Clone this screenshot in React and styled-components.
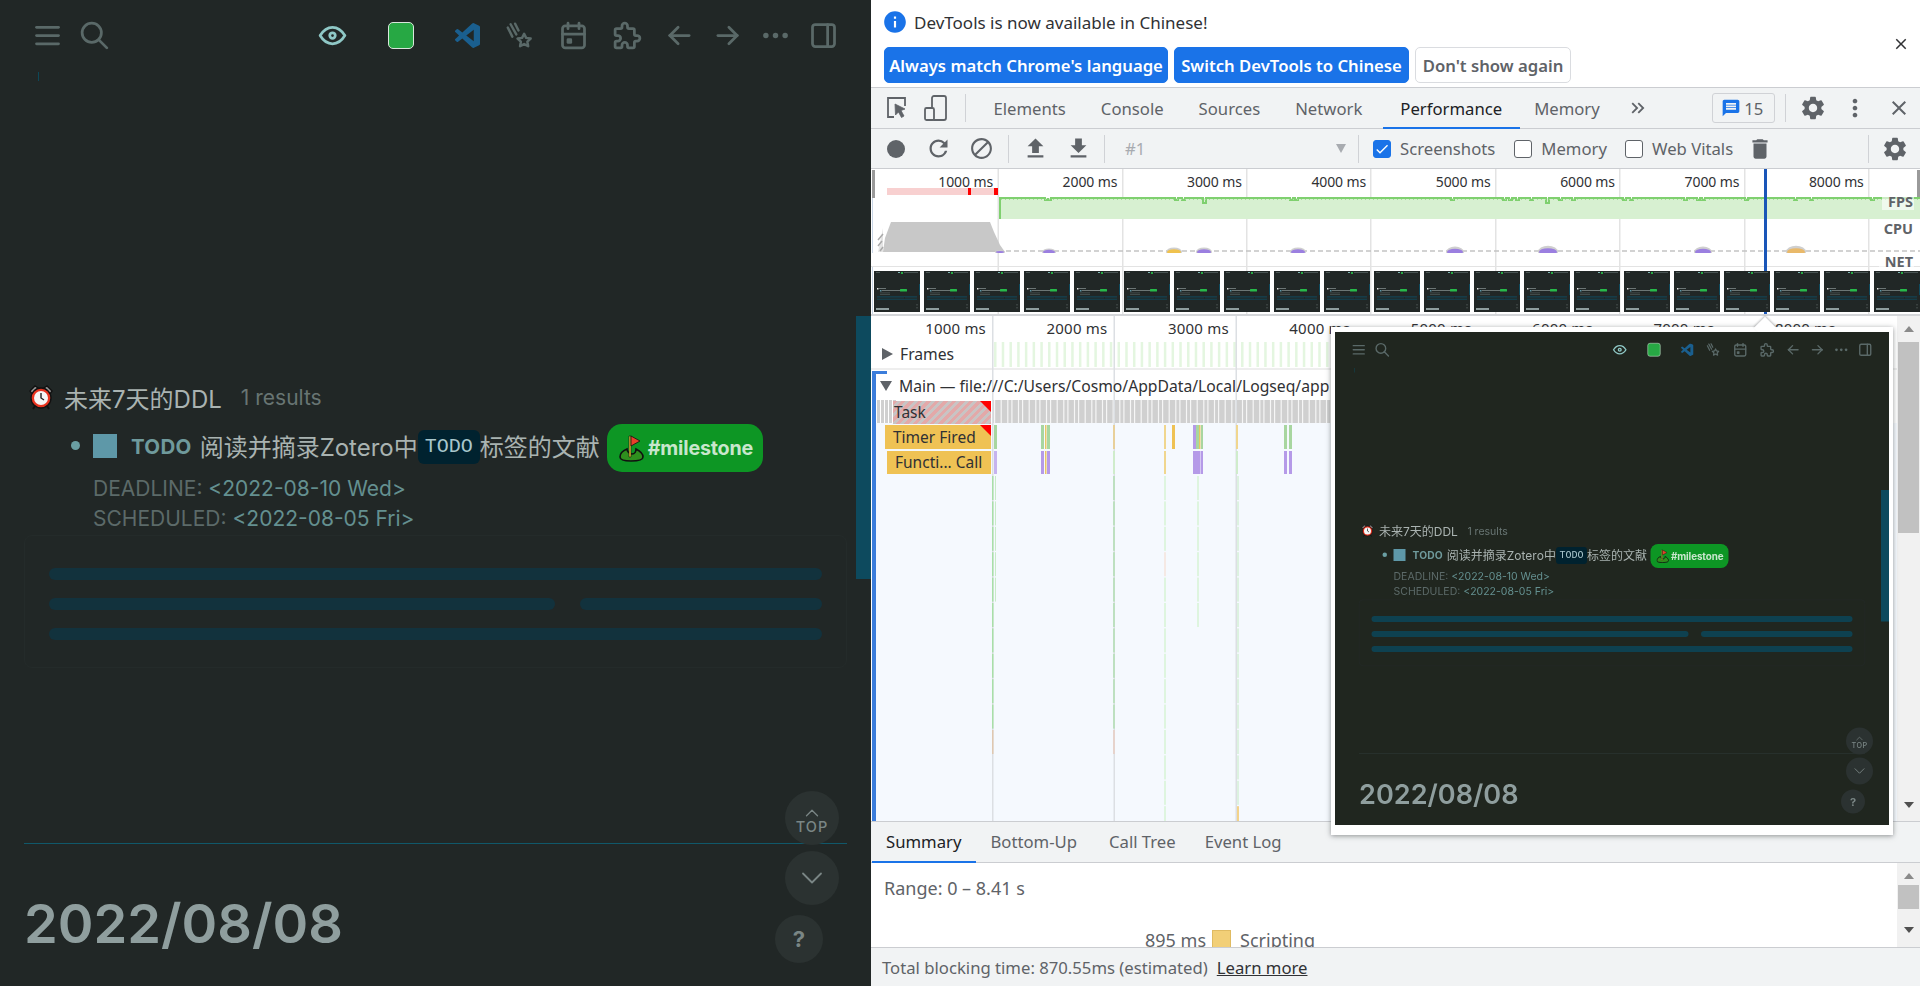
import React from "react";
import styled, { createGlobalStyle } from "styled-components";
import { TbMenu2, TbSearch, TbEye, TbCalendarEvent, TbPuzzle, TbArrowLeft, TbArrowRight, TbDots, TbLayoutSidebarRight, TbChevronUp, TbChevronDown } from "react-icons/tb";
import { MdInfo, MdClose, MdSettings, MdMoreVert, MdRefresh, MdBlock, MdFileUpload, MdFileDownload, MdDelete, MdMessage, MdCheck, MdKeyboardDoubleArrowRight } from "react-icons/md";

const Global = createGlobalStyle`
  html, body { margin: 0; padding: 0; background: #fff; }
  * { box-sizing: border-box; }
`;

const Root = styled.div`
  display: flex;
  width: 1920px;
  height: 986px;
  overflow: hidden;
  font-family: "Noto Sans", "Open Sans", sans-serif;
`;

/* ---------- Logseq page ---------- */
const Page = styled.div`
  position: relative;
  flex: none;
  display: flex;
  flex-direction: column;
  width: ${(p) => p.$w}px;
  height: 986px;
  overflow: hidden;
  background: ${(p) => (p.$dim ? "#20261f" : "#212726")};
  font-family: Inter, "Noto Sans CJK SC", sans-serif;
`;
const Header = styled.header`
  flex: none;
  display: flex;
  align-items: center;
  justify-content: space-between;
  height: 70px;
  padding: 0 31px;
  color: #5a6968;
`;
const IconGroup = styled.div`
  display: flex;
  align-items: center;
`;
const Slot = styled.span`
  display: flex;
  align-items: center;
  justify-content: center;
  width: 33px;
  height: 33px;
  margin-left: ${(p) => p.$gap || 0}px;
  color: ${(p) => p.$color || "inherit"};
`;
const GreenSwatch = styled.span`
  display: block;
  width: 26px;
  height: 27px;
  background: #27a844;
  border: 1px solid #d9e6dc;
  border-radius: 5px;
`;
const Caret = styled.div`
  flex: none;
  width: 1px;
  height: 9px;
  margin: 2px 0 0 38px;
  background: #0d4858;
`;
const Content = styled.main`
  flex: none;
  padding: 299px ${(p) => p.$pad}px 0 ${(p) => p.$pad}px;
`;
const Heading = styled.div`
  display: flex;
  align-items: center;
  height: 34px;
  padding-left: 4px;
  color: #aab3b1;
  font-size: 24px;
`;
const HeadingText = styled.span`
  margin-left: 10px;
`;
const Results = styled.span`
  margin-left: 19px;
  color: #687573;
  font-size: 21px;
`;
const TodoRow = styled.div`
  display: flex;
  align-items: center;
  height: 48px;
  margin-top: 10px;
  padding-left: 47px;
  color: #a9b3b1;
  font-size: 24px;
`;
const Bullet = styled.span`
  width: 9px;
  height: 9px;
  margin: -6px 13px 0 0;
  border-radius: 50%;
  background: #6a9fa3;
`;
const Check = styled.span`
  width: 24px;
  height: 24px;
  margin-top: -5px;
  background: #5e98a8;
`;
const TodoWord = styled.span`
  margin: -4px 8px 0 14px;
  color: #6f9a9c;
  font-weight: 700;
  font-size: 20.5px;
  letter-spacing: 0.3px;
`;
const RowText = styled.span`
  margin-top: -5px;
  white-space: nowrap;
`;
const CodeChip = styled.code`
  display: flex;
  align-items: center;
  justify-content: center;
  width: 62px;
  height: 34px;
  margin-top: -3px;
  background: #00222f;
  border-radius: 6px;
  color: #a9c7cd;
  font-family: "Liberation Mono", monospace;
  font-size: 20px;
`;
const TagPill = styled.span`
  display: flex;
  align-items: center;
  width: 156px;
  height: 48px;
  margin-left: 7px;
  padding-left: 12px;
  background: #0d9624;
  border-radius: 15px;
  color: #c8e6cc;
  font-weight: 700;
  font-size: 19.7px;
  letter-spacing: -0.2px;
`;
const TagText = styled.span`
  margin-left: 4px;
`;
const Meta = styled.div`
  height: 30px;
  margin-top: ${(p) => p.$mt || 0}px;
  padding-left: 69px;
  color: #5c6a69;
  font-size: 21px;
  line-height: 30px;
  white-space: nowrap;
`;
const MetaDate = styled.span`
  color: #649090;
`;
const SkeletonCard = styled.div`
  display: flex;
  flex-direction: column;
  gap: 18px;
  height: 133px;
  margin-top: 1px;
  padding: 32px 24px 0;
  border: 1px solid #242b2a;
  border-radius: 8px;
`;
const BarRow = styled.div`
  display: flex;
  gap: 25px;
`;
const SkeletonBar = styled.div`
  flex: ${(p) => p.$grow || 1} 1 0;
  height: 12px;
  border-radius: 6px;
  background: ${(p) => (p.$dim ? "#0e4150" : "#12323d")};
`;
const Footer = styled.footer`
  flex: none;
  margin: 175px ${(p) => p.$pad}px 0;
  padding: 49px 0 0;
  border-top: 1px solid ${(p) => (p.$dim ? "#2f3b3b" : "#10586a")};
  color: #8f9e9e;
  font-size: 54.2px;
  font-weight: 600;
  line-height: 60px;
`;
const PageScroll = styled.div`
  position: absolute;
  top: 316px;
  right: 0;
  width: ${(p) => p.$w}px;
  height: 263px;
  background: #0d4a5e;
`;
const FloatStack = styled.div`
  position: absolute;
  top: 791px;
  right: 32px;
  display: flex;
  flex-direction: column;
  align-items: flex-end;
`;
const FloatButton = styled.div`
  display: flex;
  flex-direction: column;
  align-items: center;
  justify-content: center;
  width: ${(p) => p.$size}px;
  height: ${(p) => p.$size}px;
  margin: ${(p) => p.$m || 0};
  border-radius: 50%;
  background: #2b3231;
  color: #7a8685;
`;
const TopLabel = styled.span`
  margin-top: -4px;
  font-size: 14.5px;
  line-height: 14px;
  letter-spacing: 1px;
  font-weight: 500;
`;
const HelpMark = styled.span`
  font-size: 22px;
  font-weight: 700;
`;

const AlarmEmoji = () => (
  <svg width="26" height="26" viewBox="0 0 26 26" style={{ flex: "none" }}>
    <path d="M2 7 7 2l3 2-6 6zM24 7l-5-5-3 2 6 6z" fill="#9a9a9a" stroke="#111" strokeWidth="1.4" />
    <path d="M7 22 5 25M19 22l2 3" stroke="#111" strokeWidth="2" />
    <circle cx="13" cy="14" r="10" fill="#e8331f" stroke="#111" strokeWidth="1.4" />
    <circle cx="13" cy="14" r="7" fill="#f6f6f6" />
    <path d="M13 9v5l3 2" fill="none" stroke="#222" strokeWidth="1.4" />
  </svg>
);
const GolfEmoji = () => (
  <svg width="25" height="28" viewBox="0 0 25 28" style={{ flex: "none" }}>
    <path d="M8 15C3 17 1 20 1 23c0 3 3 4 11 4s12-1 12-4c0-3-3-6-7-8 0 2-1 5-4 5s-5-3-5-5z" fill="#2f8f1e" stroke="#111" strokeWidth="1.6" />
    <path d="M10 2h2v21h-2z" fill="#e4c133" stroke="#111" strokeWidth=".6" />
    <path d="M12 2l9 5-9 5z" fill="#e8402a" stroke="#111" strokeWidth=".8" />
  </svg>
);
const MeteorIcon = () => (
  <svg width="27" height="27" viewBox="0 0 24 24" fill="none" stroke="currentColor" strokeWidth="2.2" strokeLinecap="round" strokeLinejoin="round">
    <path d="M5 2l5 9M2.5 5l4 8M9 1.500l3 6" />
    <path d="M17 10.500l1.800 3.600 4 .6-2.900 2.800.7 4-3.600-1.900-3.600 1.900.7-4-2.900-2.800 4-.6z" />
  </svg>
);
const VsCodeIcon = () => (
  <svg width="25" height="25" viewBox="0 0 24 24" fill="currentColor">
    <path d="M23.15 2.587L18.21.21a1.494 1.494 0 0 0-1.705.29l-9.46 8.63-4.12-3.128a.999.999 0 0 0-1.276.057L.327 7.261A1 1 0 0 0 .326 8.74L3.899 12 .326 15.26a1 1 0 0 0 .001 1.479L1.65 17.94a.999.999 0 0 0 1.276.057l4.12-3.128 9.46 8.63a1.492 1.492 0 0 0 1.704.29l4.942-2.377A1.5 1.5 0 0 0 24 20.06V3.939a1.5 1.5 0 0 0-.85-1.352zm-5.146 14.861L10.826 12l7.178-5.448v10.896z" />
  </svg>
);

const LogseqPage = ({ w, pad, dim }) => (
  <Page $w={w} $dim={dim}>
    <Header>
      <IconGroup>
        <Slot><TbMenu2 size={33} /></Slot>
        <Slot $gap={14}><TbSearch size={33} /></Slot>
      </IconGroup>
      <IconGroup>
        <Slot $color="#8fc8c6"><TbEye size={33} /></Slot>
        <Slot $gap={35}><GreenSwatch /></Slot>
        <Slot $gap={34} $color="#1a5f8f"><VsCodeIcon /></Slot>
        <Slot $gap={18}><MeteorIcon /></Slot>
        <Slot $gap={22}><TbCalendarEvent size={33} /></Slot>
        <Slot $gap={21}><TbPuzzle size={33} /></Slot>
        <Slot $gap={19}><TbArrowLeft size={33} /></Slot>
        <Slot $gap={15}><TbArrowRight size={33} /></Slot>
        <Slot $gap={15}><TbDots size={33} /></Slot>
        <Slot $gap={15}><TbLayoutSidebarRight size={33} /></Slot>
      </IconGroup>
    </Header>
    <Caret />
    <Content $pad={pad}>
      <Heading>
        <AlarmEmoji />
        <HeadingText>未来7天的DDL</HeadingText>
        <Results>1 results</Results>
      </Heading>
      <TodoRow>
        <Bullet />
        <Check />
        <TodoWord>TODO</TodoWord>
        <RowText>阅读并摘录Zotero中</RowText>
        <CodeChip>TODO</CodeChip>
        <RowText>标签的文献</RowText>
        <TagPill>
          <GolfEmoji />
          <TagText>#milestone</TagText>
        </TagPill>
      </TodoRow>
      <Meta $mt={2}>DEADLINE: <MetaDate>&lt;2022-08-10 Wed&gt;</MetaDate></Meta>
      <Meta>SCHEDULED: <MetaDate>&lt;2022-08-05 Fri&gt;</MetaDate></Meta>
      <SkeletonCard>
        <BarRow><SkeletonBar $dim={dim} /></BarRow>
        <BarRow><SkeletonBar $dim={dim} $grow={2.09} /><SkeletonBar $dim={dim} /></BarRow>
        <BarRow><SkeletonBar $dim={dim} /></BarRow>
      </SkeletonCard>
    </Content>
    <Footer $pad={pad} $dim={dim}>2022/08/08</Footer>
    <PageScroll $w={dim ? 16 : 15} />
    <FloatStack>
      <FloatButton $size={54}>
        <TbChevronUp size={22} strokeWidth={1.4} />
        <TopLabel>TOP</TopLabel>
      </FloatButton>
      <FloatButton $size={54} $m="6px 0 0"><TbChevronDown size={36} strokeWidth={1.2} /></FloatButton>
      <FloatButton $size={48} $m="10px 16px 0 0"><HelpMark>?</HelpMark></FloatButton>
    </FloatStack>
  </Page>
);

/* ---------- DevTools ---------- */
const Dev = styled.div`
  position: relative;
  flex: 1;
  display: flex;
  flex-direction: column;
  min-width: 0;
  height: 986px;
  background: #fff;
  color: #5f6368;
  font-size: 16.7px;
`;
const InfoBar = styled.div`
  flex: none;
  display: flex;
  justify-content: space-between;
  align-items: center;
  height: 88px;
  padding: 0 10px 0 13px;
  border-bottom: 1px solid #cbcdd1;
`;
const InfoMain = styled.div`
  align-self: flex-start;
`;
const InfoText = styled.div`
  display: flex;
  align-items: center;
  gap: 6px;
  height: 44px;
  color: #303134;
  font-size: 17px;
`;
const InfoButtons = styled.div`
  display: flex;
  gap: 6px;
  margin-top: 3px;
`;
const InfoButton = styled.button`
  width: ${(p) => p.$w}px;
  height: 36px;
  padding: 0;
  border: 1px solid ${(p) => (p.$plain ? "#dadce0" : "#1a73e8")};
  border-radius: 5px;
  background: ${(p) => (p.$plain ? "#fff" : "#1a73e8")};
  color: ${(p) => (p.$plain ? "#5f6368" : "#fff")};
  font: 600 16.7px "Noto Sans", sans-serif;
  white-space: nowrap;
`;
const TabBar = styled.div`
  flex: none;
  display: flex;
  align-items: center;
  height: 41px;
  padding-left: 14px;
  background: #f1f3f4;
  border-bottom: 1px solid #cbcdd1;
`;
const Sep = styled.span`
  flex: none;
  width: 1px;
  height: 28px;
  margin: ${(p) => p.$m || "0"};
  background: #d0d2d6;
`;
const Tab = styled.span`
  display: flex;
  align-items: center;
  height: 40px;
  padding: 1px 17.5px 0;
  margin: 0 0 -1px ${(p) => p.$ml || 0}px;
  color: ${(p) => (p.$on ? "#202124" : "#5f6368")};
  border-bottom: 2px solid ${(p) => (p.$on ? "#1a73e8" : "transparent")};
  white-space: nowrap;
`;
const Badge = styled.span`
  display: flex;
  align-items: center;
  gap: 3px;
  width: 63px;
  height: 30px;
  margin-left: 63px;
  padding-left: 8px;
  border: 1px solid #d0d2d6;
  border-radius: 3px;
`;
const IconAt = styled.span`
  display: flex;
  flex: none;
  margin-left: ${(p) => p.$ml || 0}px;
  color: ${(p) => p.$color || "#5f6368"};
`;
const Toolbar = styled.div`
  flex: none;
  display: flex;
  align-items: center;
  height: 40px;
  padding-left: 14px;
  background: #f1f3f4;
  border-bottom: 1px solid #cbcdd1;
`;
const Record = styled.span`
  width: 18px;
  height: 18px;
  margin-left: 2px;
  border-radius: 50%;
  background: #5f6368;
`;
const RunSelect = styled.div`
  display: flex;
  justify-content: space-between;
  align-items: center;
  width: 253px;
  padding: 0 12px 0 20px;
  color: #a8abb0;
`;
const SelectArrow = styled.span`
  border-left: 5px solid transparent;
  border-right: 5px solid transparent;
  border-top: 9px solid #a8abb0;
`;
const CheckBox = styled.span`
  display: flex;
  align-items: center;
  justify-content: center;
  flex: none;
  width: 18px;
  height: 18px;
  margin-left: ${(p) => p.$ml}px;
  border-radius: 3px;
  border: 1px solid ${(p) => (p.$on ? "#1a73e8" : "#5f6368")};
  background: ${(p) => (p.$on ? "#1a73e8" : "#fff")};
  color: #fff;
`;
const CheckLabel = styled.span`
  margin-left: 9px;
  white-space: nowrap;
`;
const Overview = styled.div`
  position: relative;
  flex: none;
  height: 147px;
  overflow: hidden;
  border-bottom: 2px solid #d4d6d9;
`;
const ChartSvg = styled.svg`
  position: absolute;
  inset: 0;
  display: block;
`;
const Ticks = styled.div`
  position: relative;
  display: flex;
  height: ${(p) => p.$h}px;
  align-items: center;
  color: #303134;
  font-size: ${(p) => p.$fs}px;
  letter-spacing: ${(p) => p.$ls}px;
`;
const Tick = styled.span`
  flex: none;
  width: ${(p) => p.$w}px;
  padding-right: ${(p) => p.$pr}px;
  text-align: right;
  white-space: nowrap;
`;
const SideLabel = styled.span`
  position: absolute;
  right: 6px;
  top: ${(p) => p.$top}px;
  padding: 0 1px 0 6px;
  background: rgba(255, 255, 255, 0.6);
  color: #5f6368;
  font-size: 14.5px;
  font-weight: 700;
  line-height: 18px;
`;
const Strip = styled.div`
  position: absolute;
  top: 102px;
  left: 3px;
  display: flex;
  gap: 4px;
`;
const ThumbSvg = styled.svg`
  flex: none;
  display: block;
`;
const Flame = styled.div`
  position: relative;
  flex: none;
  display: flex;
  height: 505px;
`;
const FlameBody = styled.div`
  position: relative;
  flex: 1;
  overflow: hidden;
`;
const Track = styled.div`
  position: relative;
  display: flex;
  align-items: center;
  height: ${(p) => p.$h}px;
  margin-top: ${(p) => p.$mt || 0}px;
  padding-left: ${(p) => p.$pl}px;
  color: #303134;
  font-size: 15.7px;
  white-space: nowrap;
`;
const Arrow = styled.span`
  width: 0;
  height: 0;
  margin-right: 7px;
  ${(p) =>
    p.$down
      ? "border-left:6px solid transparent;border-right:6px solid transparent;border-top:10px solid #5f6368;"
      : "border-top:6px solid transparent;border-bottom:6px solid transparent;border-left:11px solid #5f6368;"}
`;
const FlameBox = styled.div`
  position: relative;
  display: flex;
  align-items: center;
  width: ${(p) => p.$w}px;
  height: ${(p) => p.$h}px;
  padding-left: ${(p) => p.$pl}px;
  background: ${(p) => p.$bg};
  color: #303134;
  font-size: 15.5px;
`;
const RedCorner = styled.span`
  position: absolute;
  top: 0;
  right: 0;
  border-top: 11px solid #f00;
  border-left: 11px solid transparent;
`;
const ScrollTrack = styled.div`
  flex: none;
  display: flex;
  flex-direction: column;
  align-items: center;
  width: 23px;
  background: #f1f1f1;
  padding-top: 10px;
`;
const ScrollUp = styled.span`
  border-left: 5.5px solid transparent;
  border-right: 5.5px solid transparent;
  border-bottom: 6px solid #8a8a8a;
`;
const ScrollDown = styled.span`
  margin-top: ${(p) => p.$mt}px;
  border-left: 5.5px solid transparent;
  border-right: 5.5px solid transparent;
  border-top: 6px solid #505050;
`;
const ScrollThumb = styled.div`
  width: 21px;
  height: ${(p) => p.$h}px;
  margin-top: ${(p) => p.$mt}px;
  background: #c1c1c1;
`;
const Popover = styled.div`
  position: absolute;
  left: 460px;
  top: 11px;
  width: 562px;
  height: 508px;
  padding: 5px 4px 10px;
  background: #fff;
  box-shadow: 0 1px 5px rgba(60, 64, 67, 0.55);
`;
const Notch = styled.span`
  position: absolute;
  left: 426px;
  top: -7px;
  width: 16px;
  height: 16px;
  background: #fff;
  transform: rotate(45deg);
  box-shadow: -1px -1px 2px rgba(60, 64, 67, 0.3);
`;
const PopoverFrame = styled.div`
  position: relative;
  width: 554px;
  height: 493px;
  overflow: hidden;
  filter: blur(0.5px);
`;
const Scaled = styled.div`
  position: absolute;
  top: 0;
  left: 0;
  transform: scale(0.5);
  transform-origin: 0 0;
`;
const DrawerTabs = styled.div`
  flex: none;
  display: flex;
  height: 42px;
  padding-left: 1px;
  background: #f1f3f4;
  border-top: 1px solid #cbcdd1;
  border-bottom: 1px solid #cbcdd1;
`;
const DrawerTab = styled.span`
  display: flex;
  align-items: center;
  height: 41px;
  padding: 0 ${(p) => p.$pr || 15}px 0 14px;
  border-bottom: 2px solid ${(p) => (p.$on ? "#1a73e8" : "transparent")};
  color: ${(p) => (p.$on ? "#202124" : "#5f6368")};
  white-space: nowrap;
`;
const Summary = styled.div`
  flex: none;
  display: flex;
  height: 84px;
  overflow: hidden;
  font-size: 18px;
`;
const SummaryBody = styled.div`
  flex: 1;
  padding: 13px 0 0 13px;
`;
const SummaryLine = styled.div`
  display: flex;
  align-items: flex-start;
  margin: 28px 0 0 261px;
  white-space: nowrap;
`;
const Swatch = styled.span`
  flex: none;
  width: 19px;
  height: 19px;
  margin: 2px 9px 0 6px;
  background: #f2cf77;
  border: 1px solid #e0bb62;
`;
const StatusBar = styled.div`
  flex: 1;
  display: flex;
  align-items: center;
  gap: 9px;
  padding-left: 11px;
  background: #f1f3f4;
  border-top: 1px solid #cbcdd1;
`;
const LearnMore = styled.span`
  color: #303134;
  text-decoration: underline;
`;

/* chart data */
const MAJOR = [997.5, 1122, 1246, 1370, 1495, 1619, 1744, 1868];
const DIPS = [1045, 1048, 1175, 1182, 1203, 1290, 1295, 1451, 1503, 1509, 1516, 1530, 1546, 1559, 1572, 1623, 1630, 1684, 1697, 1702, 1745, 1794, 1810, 1871];
const fpsLine = () => {
  const pts = ["1000,219", "1000,198"];
  DIPS.forEach((d) => {
    const low = d === 1203 || d === 1546 ? 203 : 200;
    pts.push(`${d},198`, `${d},${low}`, `${d + 3},${low}`, `${d + 3},198`);
  });
  pts.push(`1920,198`);
  return pts.join(" ");
};
const BUMPS = [[1000, 2, "#9b7fe0"], [1049, 4, "#9b7fe0"], [1174, 5, "#f0c24e"], [1204, 5, "#9b7fe0"], [1298, 5, "#9b7fe0"], [1455, 6, "#9b7fe0"], [1548, 7, "#9b7fe0"], [1703, 6, "#9b7fe0"], [1796, 7, "#e9b96a"]];

const OverviewChart = () => (
  <ChartSvg width="1049" height="147" viewBox="871 169 1049 147">
    <rect x="872" y="170" width="3" height="28" fill="#9a9a9a" />
    <rect x="1917" y="170" width="3" height="28" fill="#9a9a9a" />
    <rect x="872" y="198" width="1" height="118" fill="#c9d6e6" />
    {MAJOR.map((x) => <rect key={x} x={x} y="169" width="1.5" height="147" fill="#e3e3e3" />)}
    <rect x="887" y="188" width="111" height="7" fill="#f8d0d0" />
    <rect x="968" y="188" width="3" height="7" fill="#f00" />
    <rect x="994" y="188" width="4" height="7" fill="#f00" />
    <rect x="1000" y="198" width="920" height="21" fill="#d7f0d1" />
    <polyline points={fpsLine()} fill="none" stroke="#7fd06f" strokeWidth="2" />
    <line x1="1001" y1="199.5" x2="1920" y2="199.5" stroke="#a4e098" strokeWidth="1" strokeDasharray="1 3" />
    <polygon points="883,252 885,238 891,222 990,222 994,232 1000,245 1005,252" fill="#c8c8c8" />
    <polygon points="878,252 883,228 883,252" fill="#e4e4e4" />
    <path d="M878 246l4-5M878 240l5-6M880 251l3-4" stroke="#aaa" strokeWidth="1.5" />
    <line x1="990" y1="251" x2="1920" y2="251" stroke="#c4c4c4" strokeWidth="1.5" strokeDasharray="5 3" />
    {BUMPS.map(([x, r, c]) => (
      <g key={x}>
        <ellipse cx={x} cy="252" rx={r + 3} ry={r * 0.9} fill="#cfcfcf" />
        <ellipse cx={x} cy="252" rx={r + 2} ry={r * 0.55} fill={c} />
      </g>
    ))}
    <rect x="871" y="253" width="1049" height="13" fill="#fff" />
    {MAJOR.map((x) => <rect key={`n${x}`} x={x} y="253" width="1.5" height="13" fill="#e3e3e3" />)}
    <rect x="871" y="266" width="1049" height="1" fill="#e3e3e3" />
    <rect x="1764" y="169" width="3" height="147" fill="#1a56b8" />
  </ChartSvg>
);

const Thumb = () => (
  <ThumbSvg width="46" height="41" viewBox="0 0 46 41">
    <rect width="46" height="41" fill="#212726" />
    <rect x="2" y="1" width="4" height="1" fill="#4a5554" />
    <rect x="24" y="1" width="2" height="1" fill="#7fb4b2" />
    <rect x="27" y="1" width="2" height="2" fill="#27a844" />
    <rect x="30" y="1" width="14" height="1" fill="#4a5554" />
    <rect x="3" y="17" width="1.5" height="1.5" fill="#e6e6e6" />
    <rect x="5" y="17" width="7" height="1" fill="#6c7675" />
    <rect x="6" y="19" width="1.5" height="1.5" fill="#5e98a8" />
    <rect x="8" y="19" width="18" height="1" fill="#6c7675" />
    <rect x="26" y="18" width="7" height="2.5" rx="0.5" fill="#27b94a" />
    <rect x="6" y="21.5" width="10" height="0.8" fill="#4a5554" />
    <rect x="6" y="23" width="10" height="0.8" fill="#4a5554" />
    <rect x="3" y="25" width="40" height="0.8" fill="#154352" />
    <rect x="3" y="26.5" width="27" height="0.8" fill="#154352" />
    <rect x="31" y="26.5" width="12" height="0.8" fill="#154352" />
    <rect x="3" y="28" width="40" height="0.8" fill="#154352" />
    <rect x="45" y="13" width="1" height="11" fill="#0d4a5e" />
    <rect x="2" y="37" width="13" height="2" fill="#8f9e9e" />
    <rect x="42" y="33" width="2" height="1.5" fill="#39403f" />
    <rect x="42" y="36" width="2" height="1.5" fill="#39403f" />
  </ThumbSvg>
);

const FRAME_X = Array.from({ length: 44 }, (_, i) => 994 + i * 7.72);
const TASK_GAPS = Array.from({ length: 62 }, (_, i) => 994 + i * 5.6 + ((i * 7) % 5) * 0.5);
const LEFT_GAPS = [876, 880, 884, 888, 892];
const EVENTS = [
  [994, 3, "#a8d6a0", "#c6b4ef"],
  [1041, 3, "#a8d6a0", "#b59ae8"],
  [1045, 1.5, "#e8c566", "#e8c566"],
  [1047, 3, "#a8d6a0", "#b59ae8"],
  [1113, 2, "#e8d09a", "#cfeccb"],
  [1164, 2, "#f0d68e", "#f0d68e"],
  [1172, 3, "#efc254", null],
  [1193, 3, "#b59ae8", "#b59ae8"],
  [1196, 3, "#a8d6a0", "#b59ae8"],
  [1199, 1.5, "#e8c566", "#b59ae8"],
  [1201, 2, "#a8d6a0", "#b59ae8"],
  [1236, 2, "#f0d68e", "#cfeccb"],
  [1284, 3, "#a8d6a0", "#b59ae8"],
  [1289, 3, "#a8d6a0", "#b59ae8"],
];
/* lower flame rows: stacks of short slices, one list of colours per column */
const rep = (n, c) => Array(n).fill(c);
const STACKS = [
  [992, 1.5, [...rep(10, "#a8dfa8"), "#e0c8b0"]],
  [995, 1, rep(5, "#c8ebc8")],
  [1113, 2, [...rep(10, "#bde0c0"), "#e6d3cc"]],
  [1164, 2, [...rep(3, "#def5df"), "#f5e9e4", ...rep(10, "#def5df")]],
  [1197, 2, rep(6, "#def5df")],
  [1237, 2, [...rep(13, "#dcf2e0"), "#f3d38a"]],
];
const FlameChart = () => (
  <ChartSvg width="1026" height="505" viewBox="871 316 1026 505">
    <rect x="876" y="423" width="1021" height="398" fill="#f5f9fe" />
    <rect x="871" y="368" width="1026" height="2" fill="#eeeeee" />
    {FRAME_X.map((x) => <rect key={x} x={x} y="342" width="2.5" height="25" fill="#e4f6e0" />)}
    <rect x="876" y="400" width="20" height="23" fill="#d0d0d0" />
    {LEFT_GAPS.map((x) => <rect key={x} x={x} y="400" width="1" height="23" fill="#fff" />)}
    <rect x="992" y="400" width="340" height="23" fill="#d0d0d0" />
    {TASK_GAPS.map((x) => <rect key={x} x={x} y="400" width="1.2" height="23" fill="#f6f6f6" />)}
    {[992, 1113.5, 1235.5].map((x) => <rect key={x} x={x} y="316" width="1.5" height="505" fill="#dcdfe3" />)}
    {EVENTS.map(([x, w, a, b]) => (
      <g key={x}>
        <rect x={x} y="425" width={w} height="24" fill={a} />
        {b && <rect x={x} y="451" width={w} height="23" fill={b} />}
      </g>
    ))}
    {STACKS.map(([x, w, cols]) =>
      cols.map((c, i) => <rect key={`${x}-${i}`} x={x} y={476 + i * 25.4} width={w} height="24" fill={c} />)
    )}
    <rect x="872" y="372" width="4" height="449" fill="#3b7ddb" />
    <rect x="872" y="371" width="15" height="3" fill="#3b7ddb" />
  </ChartSvg>
);

const OV_TICKS = ["1000 ms", "2000 ms", "3000 ms", "4000 ms", "5000 ms", "6000 ms", "7000 ms", "8000 ms"];

export default function App() {
  return (
    <Root>
      <Global />
      <LogseqPage w={871} pad={24} />
      <Dev>
        <InfoBar>
          <InfoMain>
            <InfoText>
              <MdInfo size={26} color="#1a73e8" style={{ marginLeft: -2 }} />
              <span>DevTools is now available in Chinese!</span>
            </InfoText>
            <InfoButtons>
              <InfoButton $w={284}>Always match Chrome's language</InfoButton>
              <InfoButton $w={235}>Switch DevTools to Chinese</InfoButton>
              <InfoButton $w={156} $plain>Don't show again</InfoButton>
            </InfoButtons>
          </InfoMain>
          <MdClose size={18} color="#303134" />
        </InfoBar>
        <TabBar>
          <svg width="24" height="26" viewBox="0 0 24 26" fill="none" stroke="#5f6368">
            <path d="M9 22H3V3h17v8" strokeWidth="1.8" />
            <path d="M10 9l10 5-4 1.500 3 5.500-2.500 1.500-3-5.500-3 3z" fill="#5f6368" strokeWidth="0.8" />
          </svg>
          <svg width="26" height="28" viewBox="0 0 26 28" fill="none" stroke="#5f6368" strokeWidth="1.8" style={{ marginLeft: 14 }}>
            <rect x="9" y="2" width="14" height="24" rx="2" />
            <rect x="2" y="14" width="9" height="12" rx="1.500" fill="#f1f3f4" />
          </svg>
          <Sep $m="0 10px 0 16px" />
          <Tab>Elements</Tab>
          <Tab>Console</Tab>
          <Tab>Sources</Tab>
          <Tab>Network</Tab>
          <Tab $on $ml={3}>Performance</Tab>
          <Tab $ml={-3}>Memory</Tab>
          <IconAt $ml={10}><MdKeyboardDoubleArrowRight size={22} /></IconAt>
          <Badge><MdMessage size={20} color="#1a73e8" />15</Badge>
          <Sep $m="0 13px 0 10px" />
          <MdSettings size={28} color="#5f6368" />
          <IconAt $ml={14}><MdMoreVert size={28} /></IconAt>
          <IconAt $ml={18}><MdClose size={24} /></IconAt>
        </TabBar>
        <Toolbar>
          <Record />
          <IconAt $ml={20}><MdRefresh size={27} /></IconAt>
          <IconAt $ml={17}><MdBlock size={25} /></IconAt>
          <Sep $m="0 0 0 14px" />
          <IconAt $ml={13}><MdFileUpload size={27} /></IconAt>
          <IconAt $ml={16}><MdFileDownload size={27} /></IconAt>
          <Sep $m="0 0 0 12px" />
          <RunSelect>#1<SelectArrow /></RunSelect>
          <Sep $m="0" />
          <CheckBox $ml={14} $on><MdCheck size={16} /></CheckBox>
          <CheckLabel>Screenshots</CheckLabel>
          <CheckBox $ml={19} />
          <CheckLabel>Memory</CheckLabel>
          <CheckBox $ml={18} />
          <CheckLabel>Web Vitals</CheckLabel>
          <IconAt $ml={14}><MdDelete size={26} /></IconAt>
          <Sep $m="0 0 0 95px" />
          <IconAt $ml={12}><MdSettings size={28} /></IconAt>
        </Toolbar>
        <Overview>
          <OverviewChart />
          <Ticks $h={25} $fs={14} $ls={-0.1}>
            {OV_TICKS.map((t, i) => <Tick key={t} $w={i === 0 ? 126.5 : 124.4} $pr={4.5}>{t}</Tick>)}
          </Ticks>
          <SideLabel $top={23}>FPS</SideLabel>
          <SideLabel $top={50}>CPU</SideLabel>
          <SideLabel $top={83}>NET</SideLabel>
          <Strip>{Array.from({ length: 21 }, (_, i) => <Thumb key={i} />)}</Strip>
        </Overview>
        <Flame>
          <FlameBody>
            <FlameChart />
            <Ticks $h={24} $fs={15} $ls={0.2}>
              {OV_TICKS.map((t, i) => <Tick key={t} $w={i === 0 ? 122 : 121.4} $pr={7}>{t}</Tick>)}
            </Ticks>
            <Track $h={28} $pl={11}><Arrow />Frames</Track>
            <Track $h={28} $mt={4} $pl={9}><Arrow $down />Main — file:///C:/Users/Cosmo/AppData/Local/Logseq/app</Track>
            <Track $h={24} $pl={22}>
              <FlameBox $w={98} $h={23} $pl={1} $bg="repeating-linear-gradient(135deg,#e3a9a9 0 3px,#c9c4c4 3px 6px)">Task<RedCorner /></FlameBox>
            </Track>
            <Track $h={25} $pl={14}>
              <FlameBox $w={106} $h={24} $pl={8} $bg="#efc254">Timer Fired<RedCorner /></FlameBox>
            </Track>
            <Track $h={24} $mt={1} $pl={16}>
              <FlameBox $w={104} $h={23} $pl={8} $bg="#efc254">Functi... Call</FlameBox>
            </Track>
          </FlameBody>
          <ScrollTrack>
            <ScrollUp />
            <ScrollThumb $h={191} $mt={10} />
            <ScrollDown $mt={269} />
          </ScrollTrack>
          <Popover>
            <Notch />
            <PopoverFrame>
              <Scaled><LogseqPage w={1108} pad={48} dim /></Scaled>
            </PopoverFrame>
          </Popover>
        </Flame>
        <DrawerTabs>
          <DrawerTab $on>Summary</DrawerTab>
          <DrawerTab $pr={18}>Bottom-Up</DrawerTab>
          <DrawerTab>Call Tree</DrawerTab>
          <DrawerTab>Event Log</DrawerTab>
        </DrawerTabs>
        <Summary>
          <SummaryBody>
            <div>Range: 0 – 8.41 s</div>
            <SummaryLine>895 ms<Swatch />Scripting</SummaryLine>
          </SummaryBody>
          <ScrollTrack>
            <ScrollUp />
            <ScrollThumb $h={24} $mt={6} />
            <ScrollDown $mt={18} />
          </ScrollTrack>
        </Summary>
        <StatusBar>
          <span>Total blocking time: 870.55ms (estimated)</span>
          <LearnMore>Learn more</LearnMore>
        </StatusBar>
      </Dev>
    </Root>
  );
}
